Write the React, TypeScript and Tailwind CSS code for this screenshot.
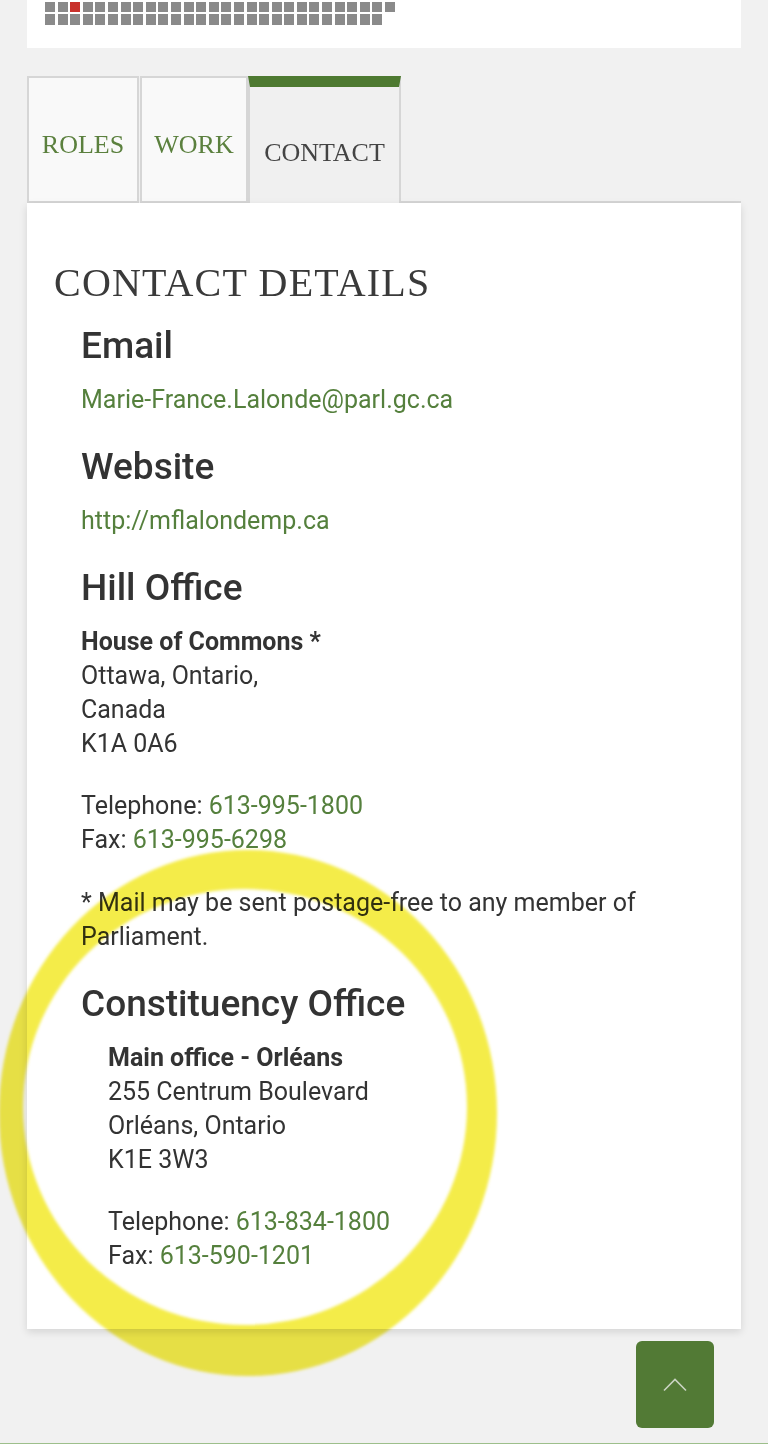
import React from "react";

const green = "text-[#55803d]";

function Seats() {
  const rows = [28, 27];
  return (
    <div className="flex flex-col gap-y-[2px] pt-[1.5px] pl-[18px]">
      {rows.map((count, r) => (
        <div key={r} className="flex gap-x-[2.6px]">
          {Array.from({ length: count }).map((_, i) => (
            <div
              key={i}
              className={
                r === 0 && i === 2
                  ? "w-[10px] h-[10.5px] bg-[#c8312b]"
                  : "w-[10px] h-[10.5px] bg-[#8a8a8a]"
              }
            />
          ))}
        </div>
      ))}
    </div>
  );
}

function Tabs() {
  return (
    <div className="flex mx-[27px] mt-[28px] font-['Liberation_Serif',serif] text-[26px]">
      <div className="w-[112px] h-[127px] border-2 border-[#d6d6d6] bg-[#f9f9f9] flex items-center justify-center pt-[10px] text-[#5b803e] mr-[1px]">
        ROLES
      </div>
      <div className="w-[108px] h-[127px] border-2 border-[#d6d6d6] bg-[#f9f9f9] flex items-center justify-center pt-[10px] text-[#5b803e]">
        WORK
      </div>
      <div className="w-[153px] h-[127px] border-x-2 border-x-[#d6d6d6] border-t-[11px] border-t-[#4e7a31] bg-[#f0f0f0] flex items-center justify-center pt-[15px] text-[#444]">
        CONTACT
      </div>
      <div className="flex-1 border-b-2 border-[#d6d6d6]" />
    </div>
  );
}

function Heading({ children }: { children: React.ReactNode }) {
  return (
    <h3 className="text-[37px] leading-[40px] font-medium text-[#333] mb-[17px]">
      {children}
    </h3>
  );
}

export default function App() {
  return (
    <div className="relative h-[1444px] overflow-hidden bg-[#f1f1f1] font-['Roboto',sans-serif] flex flex-col">
      <div className="mx-[27px] h-[48px] bg-white">
        <Seats />
      </div>

      <Tabs />

      <div className="mx-[27px] bg-white shadow-[0_3px_8px_rgba(0,0,0,0.12)] pt-[56px] pb-[56px] pl-[27px] pr-[27px]">
        <h2 className="font-['Liberation_Serif',serif] text-[40px] leading-[48px] tracking-[0.03em] text-[#3a3a3a] mb-[19px]">
          CONTACT DETAILS
        </h2>

        <div className="pl-[27px] text-[25px] leading-[34px] text-[#333]">
          <Heading>Email</Heading>
          <a className={green}>Marie-France.Lalonde@parl.gc.ca</a>

          <div className="mt-[30px]">
            <Heading>Website</Heading>
            <a className={green}>http://mflalondemp.ca</a>
          </div>

          <div className="mt-[30px]">
            <Heading>Hill Office</Heading>
            <p>
              <span className="font-bold">House of Commons *</span>
              <br />
              Ottawa, Ontario,
              <br />
              Canada
              <br />
              K1A 0A6
            </p>
            <p className="mt-[28px]">
              Telephone: <span className={green}>613-995-1800</span>
              <br />
              Fax: <span className={green}>613-995-6298</span>
            </p>
            <p className="mt-[29px]">
              * Mail may be sent postage-free to any member of Parliament.
            </p>
          </div>

          <div className="mt-[30px]">
            <Heading>Constituency Office</Heading>
            <div className="pl-[27px]">
              <p>
                <span className="font-bold">Main office - Orléans</span>
                <br />
                255 Centrum Boulevard
                <br />
                Orléans, Ontario
                <br />
                K1E 3W3
              </p>
              <p className="mt-[28px]">
                Telephone: <span className={green}>613-834-1800</span>
                <br />
                Fax: <span className={green}>613-590-1201</span>
              </p>
            </div>
          </div>
        </div>
      </div>

      <div className="flex justify-end pr-[54px] mt-[12px]">
        <button className="w-[78px] h-[87px] rounded-[6px] bg-[#527a35] flex items-center justify-center">
          <svg width="24" height="14" viewBox="0 0 24 14" fill="none">
            <polyline points="1,12.5 12,1.5 23,12.5" stroke="#c9d3c2" strokeWidth="1.6" />
          </svg>
        </button>
      </div>

      <div className="flex-1" />
      <div className="h-[1px] bg-[#9dbf8b]" />

      <svg
        className="absolute left-0 top-0 pointer-events-none mix-blend-multiply"
        width="768"
        height="1444"
        viewBox="0 0 768 1444"
      >
        <defs>
          <filter id="soft">
            <feGaussianBlur stdDeviation="1.4" />
          </filter>
        </defs>
        <path
          fillRule="evenodd"
          fill="#f4ec48"
          filter="url(#soft)"
          d="M -1 1113 A 249 263 0 1 0 497 1113 A 249 263 0 1 0 -1 1113 Z M 23 1107 A 222 218 0 1 1 467 1107 A 222 218 0 1 1 23 1107 Z"
        />
      </svg>
    </div>
  );
}
